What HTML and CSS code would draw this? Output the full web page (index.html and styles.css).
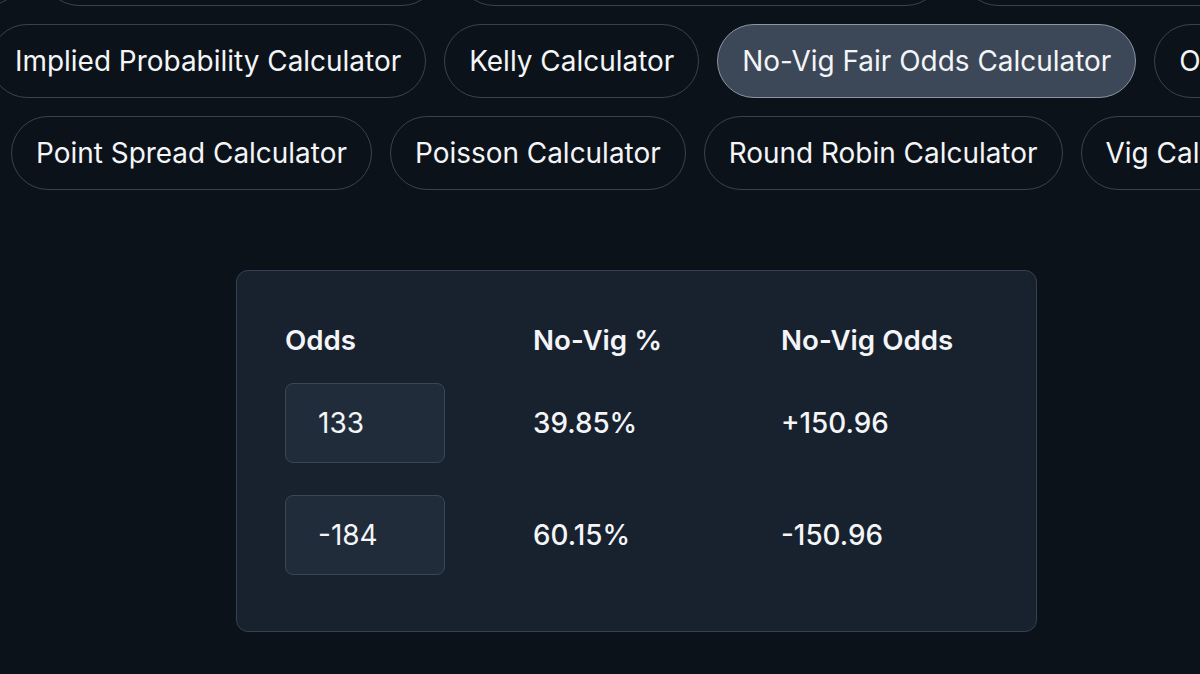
FILE: index.html
```html
<!DOCTYPE html>
<html lang="en">
<head>
<meta charset="utf-8">
<title>No-Vig Fair Odds Calculator</title>
<link rel="stylesheet" href="styles.css">
</head>
<body>
<nav class="tools">
  <div class="pill-row row-a">
    <a class="pill">Hedge Calculator</a>
    <a class="pill">Expected Value Calculator</a>
    <a class="pill">Closing Line Value Bet Calculator</a>
    <a class="pill">Free Bet Calculator</a>
  </div>
  <div class="pill-row row-b">
    <a class="pill">Implied Probability Calculator</a>
    <a class="pill">Kelly Calculator</a>
    <a class="pill active">No-Vig Fair Odds Calculator</a>
    <a class="pill">Odds Converter</a>
  </div>
  <div class="pill-row row-c">
    <a class="pill">Point Spread Calculator</a>
    <a class="pill">Poisson Calculator</a>
    <a class="pill">Round Robin Calculator</a>
    <a class="pill">Vig Calculator</a>
  </div>
</nav>

<main class="card">
  <div class="grid head">
    <div>Odds</div>
    <div>No-Vig %</div>
    <div>No-Vig Odds</div>
  </div>
  <div class="rows">
    <div class="grid row">
      <input class="odds-input" type="text" value="133">
      <div class="value">39.85%</div>
      <div class="value">+150.96</div>
    </div>
    <div class="grid row">
      <input class="odds-input" type="text" value="-184">
      <div class="value">60.15%</div>
      <div class="value">-150.96</div>
    </div>
  </div>
</main>
</body>
</html>
```

FILE: styles.css
```css
html, body {
  margin: 0;
  padding: 0;
}

body {
  background: #0c121a;
  color: #f3f5f7;
  font-family: Inter, "Noto Sans", "Liberation Sans", sans-serif;
  width: 1200px;
  height: 674px;
  overflow: hidden;
}

.tools {
  display: flex;
  flex-direction: column;
  gap: 18px;
  margin-top: -68px;
}

.pill-row {
  display: flex;
  gap: 18px;
  white-space: nowrap;
}

.row-a { margin-left: -255px; }
.row-b { margin-left: -10px; }
.row-c { margin-left: 11px; }

.pill {
  flex: none;
  display: block;
  height: 72px;
  line-height: 72px;
  padding: 0 24px;
  border: 1px solid #374352;
  border-radius: 37px;
  font-size: 27.95px;
  font-weight: 400;
  color: #f3f5f7;
}

.pill.active {
  background: #3c4757;
  border-color: #8c96a3;
}

.card {
  width: 703px;
  margin: 80px 0 0 236px;
  padding: 49px 48px 56px 48px;
  background: #18212e;
  border: 1px solid #364251;
  border-radius: 12px;
}

.grid {
  display: grid;
  grid-template-columns: repeat(3, 1fr);
  column-gap: 41px;
  align-items: center;
}

.head {
  font-size: 27.7px;
  font-weight: 600;
  line-height: 40px;
}

.rows {
  margin-top: 23px;
  display: flex;
  flex-direction: column;
  gap: 32px;
}

.odds-input {
  box-sizing: border-box;
  width: 160px;
  height: 80px;
  padding: 0 0 0 32px;
  background: #212c3b;
  border: 1px solid #3a4656;
  border-radius: 8px;
  color: #f3f5f7;
  font-family: inherit;
  font-size: 28px;
  font-weight: 400;
  outline: none;
}

.value {
  font-size: 27.8px;
  font-weight: 500;
}
```
